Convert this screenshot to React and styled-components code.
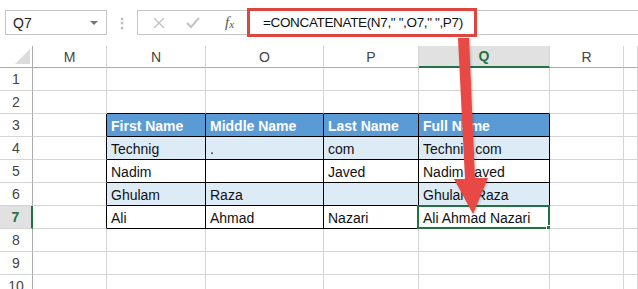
import React from 'react';
import styled, { createGlobalStyle, css } from 'styled-components';

const GlobalStyle = createGlobalStyle`
  html, body { margin: 0; padding: 0; background: #fff; }
  body { font-family: "Liberation Sans", Arial, sans-serif; overflow: hidden; }
`;

const COLS = ['M', 'N', 'O', 'P', 'Q', 'R', ''];
const WIDTHS = '33px 74px 99px 118px 95px 131px 74px 1fr';

// table lives in N3:Q7
const table = [
  ['First Name', 'Middle Name', 'Last Name', 'Full Name'],
  ['Technig', '.', 'com', 'Technig.com'],
  ['Nadim', '', 'Javed', 'Nadim Javed'],
  ['Ghulam', 'Raza', '', 'Ghulam Raza'],
  ['Ali', 'Ahmad', 'Nazari', 'Ali Ahmad Nazari'],
];

const App = () => {
  const rows = [];
  for (let r = 1; r <= 10; r++) rows.push(r);

  return (
    <Page>
      <GlobalStyle />
      <FormulaBar>
        <NameBox>
          <span>Q7</span>
          <Caret />
        </NameBox>
        <Grip>⋮</Grip>
        <IconBox>
          <svg width="12" height="12" viewBox="0 0 12 12">
            <path d="M1 1 L11 11 M11 1 L1 11" stroke="#c2c2c2" strokeWidth="1.4" fill="none" />
          </svg>
          <svg width="14" height="12" viewBox="0 0 14 12">
            <path d="M1 6 L5 10 L13 1" stroke="#c2c2c2" strokeWidth="2" fill="none" />
          </svg>
          <Fx>
            f<sub>x</sub>
          </Fx>
        </IconBox>
        <FormulaField>
          <Highlight>=CONCATENATE(N7," ",O7," ",P7)</Highlight>
        </FormulaField>
      </FormulaBar>

      <Sheet>
        <Corner />
        {COLS.map((c) => (
          <ColHead key={c || 'S'} $active={c === 'Q'}>
            {c}
          </ColHead>
        ))}
        {rows.map((r) => (
          <React.Fragment key={r}>
            <RowHead $active={r === 7}>{r}</RowHead>
            {COLS.map((c, ci) => {
              const inTable = r >= 3 && r <= 7 && ci >= 1 && ci <= 4;
              const leftOfTable = r >= 3 && r <= 7 && ci === 0;
              const aboveTable = r === 2 && ci >= 1 && ci <= 4;
              const value = inTable ? table[r - 3][ci - 1] : '';
              const kind = !inTable ? 'plain' : r === 3 ? 'head' : r % 2 === 0 ? 'band' : 'plain';
              return (
                <Cell
                  key={c + r}
                  $kind={kind}
                  $blackRight={inTable || leftOfTable}
                  $blackBottom={inTable || aboveTable}
                  $selected={r === 7 && c === 'Q'}
                >
                  {value}
                </Cell>
              );
            })}
          </React.Fragment>
        ))}
      </Sheet>

      <Arrow width="60" height="200" viewBox="0 0 60 200">
        <defs>
          <filter id="sh" x="-50%" y="-50%" width="200%" height="200%">
            <feDropShadow dx="1" dy="1" stdDeviation="1" floodColor="#000" floodOpacity="0.25" />
          </filter>
        </defs>
        <g filter="url(#sh)">
          <path d="M13 2 L24 2 L30 142 L43 142 L28 178 L9 143 L20 143 Z" fill="#e84a44" />
        </g>
      </Arrow>
    </Page>
  );
};

export default App;

const Page = styled.div`
  position: relative;
  width: 638px;
  height: 289px;
  overflow: hidden;
  background: #fff;
`;

const FormulaBar = styled.div`
  display: flex;
  align-items: center;
  height: 46px;
  padding: 0 0 1px 5px;
  box-sizing: border-box;
`;

const NameBox = styled.div`
  width: 102px;
  height: 25px;
  box-sizing: border-box;
  border: 1px solid #c6c6c6;
  display: flex;
  align-items: center;
  justify-content: space-between;
  padding: 0 8px 0 7px;
  font-size: 14px;
  color: #222;
`;

const Caret = styled.div`
  width: 0;
  height: 0;
  border-left: 4px solid transparent;
  border-right: 4px solid transparent;
  border-top: 4px solid #777;
`;

const Grip = styled.div`
  width: 30px;
  text-align: center;
  color: #b8b8b8;
  font-size: 14px;
  font-weight: bold;
`;

const IconBox = styled.div`
  width: 112px;
  height: 25px;
  box-sizing: border-box;
  border: 1px solid #c6c6c6;
  display: flex;
  align-items: center;
  gap: 21px;
  padding-left: 15px;
`;

const Fx = styled.span`
  font-family: "Liberation Serif", "Times New Roman", serif;
  font-style: italic;
  font-size: 15px;
  color: #555;
  margin-left: 4px;
  sub {
    font-size: 11px;
    vertical-align: -1px;
  }
`;

const FormulaField = styled.div`
  flex: 1;
  height: 25px;
  box-sizing: border-box;
  border-top: 1px solid #c6c6c6;
  border-bottom: 1px solid #c6c6c6;
  display: flex;
  align-items: center;
  margin-left: -2px;
`;

const Highlight = styled.div`
  width: 230px;
  height: 29px;
  flex: none;
  box-sizing: border-box;
  border: 3px solid #e0443f;
  display: flex;
  align-items: center;
  padding-left: 13px;
  font-size: 13.5px;
  letter-spacing: -0.35px;
  color: #111;
  white-space: nowrap;
  background: #fff;
`;

const Sheet = styled.div`
  display: grid;
  grid-template-columns: ${WIDTHS};
  grid-template-rows: 22px repeat(10, 23px);
`;

const Corner = styled.div`
  position: relative;
  border-right: 1px solid #ababab;
  border-bottom: 1px solid #ababab;
  &::after {
    content: '';
    position: absolute;
    right: 2px;
    bottom: 3px;
    border-left: 15px solid transparent;
    border-bottom: 15px solid #dcdcdc;
  }
`;

const ColHead = styled.div`
  display: flex;
  align-items: center;
  justify-content: center;
  font-size: 14px;
  color: #444;
  border-right: 1px solid #d4d4d4;
  border-bottom: 1px solid #ababab;
  ${(p) =>
    p.$active &&
    css`
      background: #e1e1e1;
      color: #217346;
      font-weight: bold;
      border-bottom: 2px solid #217346;
    `}
`;

const RowHead = styled.div`
  display: flex;
  align-items: center;
  justify-content: center;
  font-size: 14px;
  color: #444;
  border-right: 1px solid #ababab;
  border-bottom: 1px solid #d4d4d4;
  ${(p) =>
    p.$active &&
    css`
      background: #e1e1e1;
      color: #217346;
      font-weight: bold;
      border-right: 2px solid #217346;
    `}
`;

const kinds = {
  plain: css`
    background: #fff;
    color: #111;
  `,
  band: css`
    background: #ddebf7;
    color: #111;
  `,
  head: css`
    background: #5b9bd5;
    color: #fff;
    font-weight: bold;
  `,
};

const Cell = styled.div`
  position: relative;
  display: flex;
  align-items: flex-end;
  padding: 0 0 2px 4px;
  box-sizing: border-box;
  font-size: 14px;
  white-space: nowrap;
  border-right: 1px solid ${(p) => (p.$blackRight ? '#000' : '#d4d4d4')};
  border-bottom: 1px solid ${(p) => (p.$blackBottom ? '#000' : '#d4d4d4')};
  ${(p) => kinds[p.$kind]}
  ${(p) =>
    p.$selected &&
    css`
      &::before {
        content: '';
        position: absolute;
        left: -2px;
        top: -1px;
        right: -1px;
        bottom: -1px;
        border: 2px solid #217346;
      }
      &::after {
        content: '';
        position: absolute;
        right: -4px;
        bottom: -4px;
        width: 5px;
        height: 5px;
        background: #217346;
        border: 1px solid #fff;
      }
    `}
`;

const Arrow = styled.svg`
  position: absolute;
  left: 445px;
  top: 36px;
  overflow: visible;
`;
